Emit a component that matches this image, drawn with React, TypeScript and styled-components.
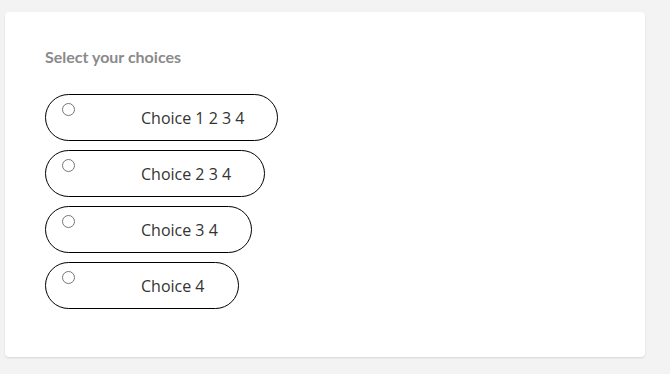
import React from "react";
import styled, { createGlobalStyle } from "styled-components";

const GlobalStyle = createGlobalStyle`
    html, body {
        margin: 0;
        padding: 0;
        background: #f3f3f3;
    }
`;

const choices = ["Choice 1 2 3 4", "Choice 2 3 4", "Choice 3 4", "Choice 4"];

const App = () => {
    return (
        <Page>
            <GlobalStyle />
            <Card>
                <Title>Select your choices</Title>
                <ChoiceList>
                    {choices.map((c) => (
                        <ChoicePill key={c}>
                            <Radio type="radio" name="choices" />
                            <ChoiceLabel>{c}</ChoiceLabel>
                        </ChoicePill>
                    ))}
                </ChoiceList>
            </Card>
        </Page>
    );
};

const Page = styled.div`
    padding: 12px 25px 17px 5px;
`;

const Card = styled.div`
    background: #ffffff;
    border-radius: 4px;
    box-shadow: 0 1px 2px rgba(0, 0, 0, 0.12);
    padding: 35px 40px 48px 40px;
    height: 345px;
    box-sizing: border-box;
`;

const Title = styled.div`
    font-family: Lato, "Liberation Sans", sans-serif;
    font-weight: 700;
    font-size: 16px;
    line-height: 20px;
    color: #8a8a8a;
    margin-bottom: 27px;
`;

const ChoiceList = styled.div`
    display: flex;
    flex-direction: column;
    align-items: flex-start;
    gap: 9px;
`;

const ChoicePill = styled.label`
    display: inline-flex;
    align-items: center;
    box-sizing: border-box;
    height: 47px;
    padding: 0 33px 0 16px;
    border: 1px solid #000;
    border-radius: 24px;
    cursor: pointer;
`;

const Radio = styled.input`
    width: 13px;
    height: 13px;
    margin: 0;
    align-self: flex-start;
    margin-top: 8px;
`;

const ChoiceLabel = styled.span`
    font-family: "Open Sans", "Liberation Sans", sans-serif;
    font-size: 16px;
    color: #333;
    margin-left: 66px;
`;

export default App;
